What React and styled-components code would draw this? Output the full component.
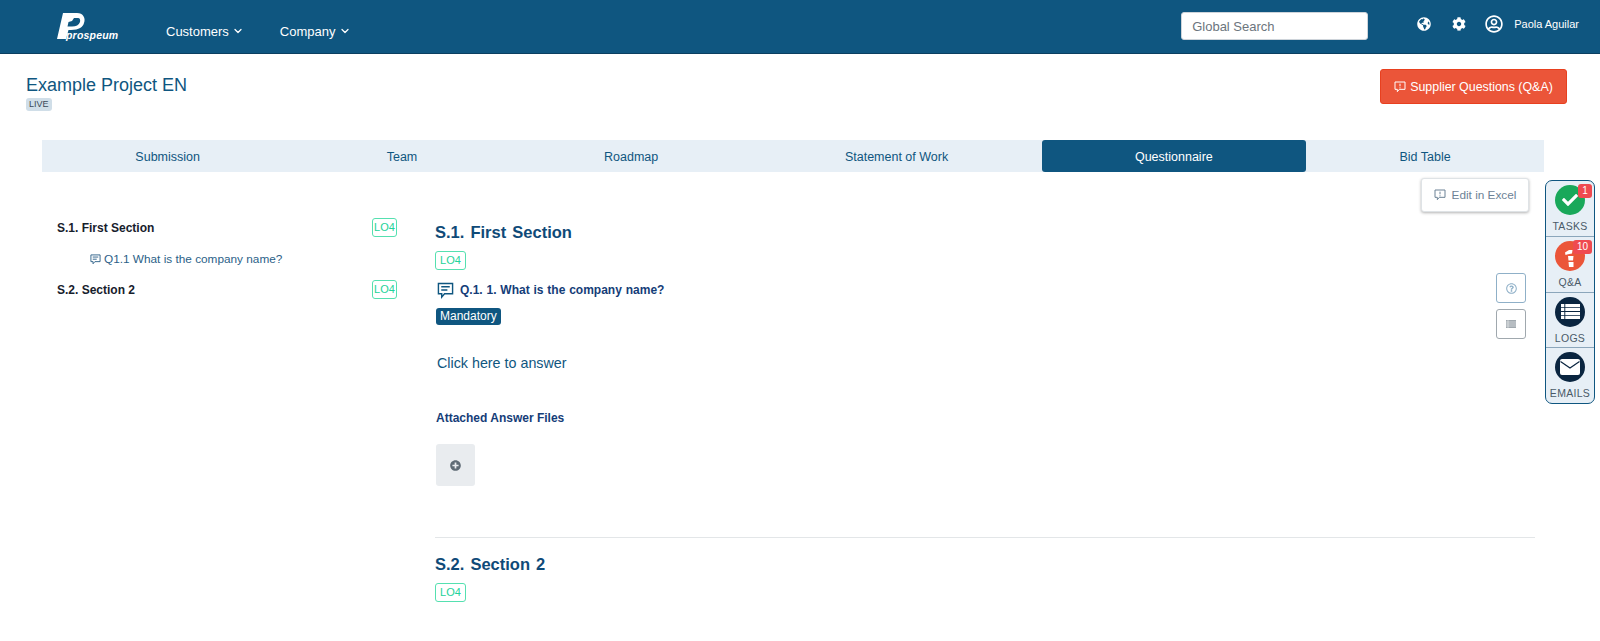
import React from 'react'
import styled, { createGlobalStyle } from 'styled-components'
import { FaGlobeAmericas, FaCog, FaRegUserCircle, FaCheck, FaPlusCircle, FaRegQuestionCircle } from 'react-icons/fa'
import { ChevronDown } from 'lucide-react'

const Global = createGlobalStyle`
    html, body { margin: 0; padding: 0; background: #fff; overflow: hidden; }
    body { font-family: "Liberation Sans", Arial, sans-serif; }
`;

const Page = styled.div`
    position: relative;
    width: 1600px;
    height: 641px;
`;

const Header = styled.header`
    height: 54px;
    box-sizing: border-box;
    background: #0f5680;
    border-bottom: 1px solid #0b3f60;
    display: flex;
    align-items: center;
    padding: 0 21px 0 57px;
    color: #fff;
`;

const Logo = styled.div`
    position: relative;
    width: 62px;
    height: 27px;
    margin-right: 47px;
    svg { position: absolute; left: 0; top: 0; }
`;

const LogoText = styled.span`
    position: absolute;
    left: 9px;
    top: 16px;
    font-size: 10.5px;
    line-height: 12px;
    font-weight: bold;
    font-style: italic;
    letter-spacing: 0.2px;
`;

const NavItem = styled.div`
    display: flex;
    align-items: center;
    gap: 3px;
    font-size: 13px;
    margin: 9px 36px 0 0;
`;

const HeaderRight = styled.div`
    margin-left: auto;
    margin-bottom: 1px;
    display: flex;
    align-items: center;
`;

const Search = styled.input`
    width: 187px;
    height: 28px;
    box-sizing: border-box;
    border: 1px solid #ced4da;
    border-radius: 3px;
    padding: 0 10px;
    margin-right: 49px;
    font: 13px "Liberation Sans", Arial, sans-serif;
    &::placeholder { color: #6c757d; }
`;

const HeaderIcon = styled.span`
    display: flex;
    margin: 0 ${p => p.$gap}px 5px 0;
`;

const UserName = styled.span`
    font-size: 11px;
    margin-bottom: 5px;
`;

const PageHead = styled.div`
    display: flex;
    justify-content: space-between;
    padding: 15px 33px 0 26px;
    height: 86px;
    box-sizing: border-box;
`;

const Title = styled.h1`
    margin: 6px 0 0;
    font-size: 18px;
    font-weight: normal;
    line-height: 21px;
    color: #0f5680;
`;

const LiveBadge = styled.span`
    display: inline-block;
    background: #d0dee8;
    color: #3a4a58;
    font-size: 9px;
    line-height: 13px;
    padding: 0 3px;
    border-radius: 3px;
    margin-top: 2px;
    vertical-align: top;
`;

const QaButton = styled.button`
    width: 187px;
    height: 35px;
    box-sizing: border-box;
    background: #eb5539;
    border: 1px solid #e8401f;
    border-radius: 3px;
    color: #fff;
    font: 12.4px "Liberation Sans", Arial, sans-serif;
    display: flex;
    align-items: center;
    justify-content: center;
    gap: 4px;
`;

const Tabs = styled.nav`
    display: flex;
    margin: 0 56px 0 42px;
    height: 32px;
    background: #e7eff6;
`;

const Tab = styled.div`
    flex: 1 1 auto;
    padding: 1px 92px 0;
    display: flex;
    align-items: center;
    justify-content: center;
    font-size: 12.5px;
    border-radius: 3px;
    color: ${p => (p.$active ? '#fff' : '#0f5680')};
    background: ${p => (p.$active ? '#0f5680' : 'transparent')};
`;

const Toolbar = styled.div`
    display: flex;
    justify-content: flex-end;
    padding: 6px 71px 0 0;
    height: 40px;
`;

const EditButton = styled.button`
    width: 108px;
    height: 34px;
    box-sizing: border-box;
    background: #fff;
    border: 1px solid #dfe3e6;
    border-radius: 3px;
    box-shadow: 0 1px 3px rgba(0, 0, 0, 0.3);
    color: #6c8296;
    font: 11.8px "Liberation Sans", Arial, sans-serif;
    display: flex;
    align-items: center;
    justify-content: center;
    gap: 6px;
`;

const Columns = styled.div`
    display: grid;
    grid-template-columns: 340px 1100px;
    column-gap: 38px;
    padding-left: 57px;
`;

const SideRow = styled.div`
    display: flex;
    justify-content: space-between;
    align-items: center;
    height: 19px;
    font-size: 12px;
    font-weight: bold;
    color: #16202c;
`;

const SideQuestion = styled.div`
    display: flex;
    align-items: center;
    gap: 3px;
    height: 14px;
    margin: 15px 0 14px 33px;
    font-size: 11.8px;
    color: #2c5f88;
`;

const Tag = styled.span`
    display: inline-block;
    box-sizing: border-box;
    width: ${p => (p.$small ? '25px' : '31px')};
    height: 19px;
    line-height: 17px;
    border: 1px solid #55e0b0;
    border-radius: 3px;
    text-align: center;
    font-size: 11px;
    font-weight: normal;
    color: #22d39a;
    background: #fff;
`;

const Main = styled.main`
    padding-top: 4px;
`;

const SectionTitle = styled.h2`
    margin: 0;
    font-size: 16.5px;
    line-height: 20px;
    color: #0f4a78;
    word-spacing: 1.5px;
`;

const TagLine = styled.div`
    margin-top: 8px;
    height: 19px;
`;

const QuestionRow = styled.div`
    position: relative;
    display: flex;
    align-items: center;
    gap: 6px;
    margin: 12px 0 0 2px;
    font-size: 12px;
    font-weight: bold;
    color: #153d78;
    height: 18px;
    word-spacing: 0.5px;
    svg { color: #0f5680; }
`;

const SideActions = styled.div`
    position: absolute;
    right: 9px;
    top: -8px;
    display: flex;
    flex-direction: column;
    gap: 6px;
`;

const SquareButton = styled.button`
    width: 30px;
    height: 30px;
    box-sizing: border-box;
    background: #fff;
    border: 1px solid ${p => p.$color};
    border-radius: 3px;
    display: flex;
    align-items: center;
    justify-content: center;
    padding: 0;
    svg { color: ${p => p.$color}; }
`;

const Mandatory = styled.span`
    display: block;
    width: max-content;
    margin: 9px 0 0 1px;
    padding: 0 4px;
    background: #0f5680;
    color: #fff;
    font-size: 12px;
    line-height: 17px;
    border-radius: 3px;
`;

const AnswerLink = styled.div`
    margin: 30px 0 0 2px;
    font-size: 14.3px;
    line-height: 16px;
    color: #0f5680;
`;

const FilesTitle = styled.div`
    margin: 40px 0 0 1px;
    font-size: 12px;
    line-height: 14px;
    font-weight: bold;
    color: #153d78;
`;

const AddBox = styled.div`
    width: 39px;
    height: 42px;
    margin: 19px 0 0 1px;
    background: #e9ecef;
    border-radius: 3px;
    display: flex;
    align-items: center;
    justify-content: center;
    color: #5f6b75;
`;

const Divider = styled.hr`
    margin: 51px 0 16px;
    border: 0;
    border-top: 1px solid #e3e6e8;
`;

const Widget = styled.div`
    position: absolute;
    left: 1545px;
    top: 180px;
    width: 50px;
    height: 224px;
    box-sizing: border-box;
    display: flex;
    flex-direction: column;
    background: #e7eff6;
    border: 1px solid #0f5680;
    border-radius: 7px;
`;

const WidgetItem = styled.div`
    position: relative;
    flex: 1;
    box-sizing: border-box;
    display: flex;
    flex-direction: column;
    align-items: center;
    padding-top: 4px;
    border-top: ${p => (p.$first ? '0' : '1px solid #8ba6bb')};
`;

const Circle = styled.span`
    width: 30px;
    height: 30px;
    border-radius: 50%;
    background: ${p => p.$bg};
    color: #fff;
    display: flex;
    align-items: center;
    justify-content: center;
`;

const WidgetLabel = styled.span`
    margin-top: 5px;
    font-size: 10.5px;
    line-height: 13px;
    letter-spacing: 0.3px;
    color: #4a5a68;
`;

const Count = styled.span`
    position: absolute;
    right: 2px;
    top: 3px;
    min-width: 14px;
    height: 14px;
    box-sizing: border-box;
    padding: 0 ${p => (p.$wide ? 4 : 3)}px;
    background: #ef4a50;
    border-radius: 3px;
    color: #fff;
    font-size: 10px;
    line-height: 14px;
    text-align: center;
`;

// speech bubble used for questions, with lines or an exclamation mark inside
const Bubble = ({ size, alert }) => (
  <svg width={size} height={size} viewBox="0 0 18 18" fill="none" stroke="currentColor" strokeWidth="1.5">
    <path d="M1.5 1.5H16.5V12.5H8L5 16V12.5H1.5Z" />
    {alert
      ? <path d="M9 4V8M9 9.5V11" />
      : <path d="M4.5 5H13.5M4.5 8.5H11" />}
  </svg>
);

// four stacked rows with a narrow left column
const ListRows = ({ size }) => (
  <svg width={size} height={size} viewBox="0 0 20 18" fill="currentColor">
    <path d="M0 1H3.5V4.6H0ZM4.5 1H20V4.6H4.5ZM0 5.4H3.5V8.6H0ZM4.5 5.4H20V8.6H4.5ZM0 9.4H3.5V12.6H0ZM4.5 9.4H20V12.6H4.5ZM0 13.4H3.5V17H0ZM4.5 13.4H20V17H4.5Z" />
  </svg>
);

const MailIcon = () => (
  <svg width="20" height="16" viewBox="0 0 20 16">
    <rect x="0" y="0" width="20" height="16" rx="2" fill="#fff" />
    <path d="M0.5 2.5L10 9L19.5 2.5" fill="none" stroke="#0a2540" strokeWidth="1.2" />
  </svg>
);

// the part of the question mark the badge leaves visible
const QuestionPieces = () => (
  <svg width="30" height="30" viewBox="0 0 30 30" fill="#fff">
    <path d="M10 11.5L14 9H17.5L17 12.5L13 13.2L10.5 14Z" />
    <path d="M13 15H18.5L18 19.5H13.5Z" />
    <path d="M13.5 21H18.5V26H14Z" />
  </svg>
);

const Tag4 = ({ small }) => <Tag $small={small}>LO4</Tag>;

const tabs = ['Submission', 'Team', 'Roadmap', 'Statement of Work', 'Questionnaire', 'Bid Table'];

const App = () => {
  return (
    <Page>
      <Global />
      <Header>
        <Logo>
          <svg width="30" height="27" viewBox="0 0 30 27">
            <path fill="#fff" d="M6 0H20C26 0 29 5 27 10C26 14 22 17 14 17H11.5L9 26H0Z" />
            <path fill="#0f5680" d="M11.5 9L15 8L17 5H21C23 5 23.5 7 23 9C22 12 19 13.5 15 13.5H10.5Z" />
          </svg>
          <LogoText>prospeum</LogoText>
        </Logo>
        <NavItem>Customers <ChevronDown size={12} strokeWidth={2.5} /></NavItem>
        <NavItem>Company <ChevronDown size={12} strokeWidth={2.5} /></NavItem>
        <HeaderRight>
          <Search placeholder="Global Search" />
          <HeaderIcon $gap={21}><FaGlobeAmericas size={14} /></HeaderIcon>
          <HeaderIcon $gap={19}><FaCog size={14} /></HeaderIcon>
          <HeaderIcon $gap={11}><FaRegUserCircle size={18} /></HeaderIcon>
          <UserName>Paola Aguilar</UserName>
        </HeaderRight>
      </Header>

      <PageHead>
        <div>
          <Title>Example Project EN</Title>
          <LiveBadge>LIVE</LiveBadge>
        </div>
        <QaButton><Bubble size={12} alert /> Supplier Questions (Q&amp;A)</QaButton>
      </PageHead>

      <Tabs>
        {tabs.map(t => <Tab key={t} $active={t === 'Questionnaire'}>{t}</Tab>)}
      </Tabs>

      <Toolbar>
        <EditButton><Bubble size={12} alert /> Edit in Excel</EditButton>
      </Toolbar>

      <Columns>
        <aside>
          <SideRow>S.1. First Section <Tag4 small /></SideRow>
          <SideQuestion><Bubble size={11} /> Q1.1 What is the company name?</SideQuestion>
          <SideRow>S.2. Section 2 <Tag4 small /></SideRow>
        </aside>
        <Main>
          <SectionTitle>S.1. First Section</SectionTitle>
          <TagLine><Tag4 /></TagLine>
          <QuestionRow>
            <Bubble size={17} />
            Q.1. 1. What is the company name?
            <SideActions>
              <SquareButton $color="#8fb0c8"><FaRegQuestionCircle size={11} /></SquareButton>
              <SquareButton $color="#a0a8ae"><ListRows size={10} /></SquareButton>
            </SideActions>
          </QuestionRow>
          <Mandatory>Mandatory</Mandatory>
          <AnswerLink>Click here to answer</AnswerLink>
          <FilesTitle>Attached Answer Files</FilesTitle>
          <AddBox><FaPlusCircle size={11} /></AddBox>
          <Divider />
          <SectionTitle>S.2. Section 2</SectionTitle>
          <TagLine><Tag4 /></TagLine>
        </Main>
      </Columns>

      <Widget>
        <WidgetItem $first>
          <Circle $bg="#19a85a"><FaCheck size={16} /></Circle>
          <WidgetLabel>TASKS</WidgetLabel>
          <Count>1</Count>
        </WidgetItem>
        <WidgetItem>
          <Circle $bg="#eb5539"><QuestionPieces /></Circle>
          <WidgetLabel>Q&amp;A</WidgetLabel>
          <Count $wide>10</Count>
        </WidgetItem>
        <WidgetItem>
          <Circle $bg="#0a2540"><ListRows size={19} /></Circle>
          <WidgetLabel>LOGS</WidgetLabel>
        </WidgetItem>
        <WidgetItem>
          <Circle $bg="#0a2540"><MailIcon /></Circle>
          <WidgetLabel>EMAILS</WidgetLabel>
        </WidgetItem>
      </Widget>
    </Page>
  )
}

export default App
